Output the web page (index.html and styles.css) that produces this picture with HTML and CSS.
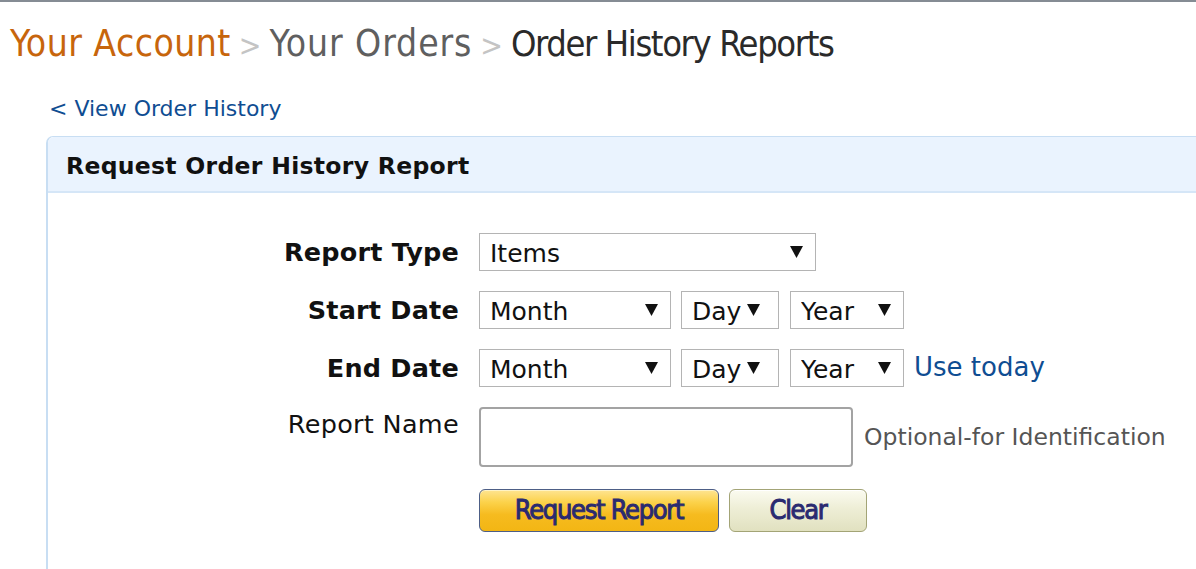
FILE: index.html
```html
<!DOCTYPE html>
<html>
<head>
<meta charset="utf-8">
<link rel="stylesheet" href="styles.css">
</head>
<body>
<div class="topline"></div>
<h1 class="crumbs"><a class="c-account" href="#">Your Account</a><span class="sep">&gt;</span><a class="c-orders" href="#">Your Orders</a><span class="sep">&gt;</span><span class="c-current">Order History Reports</span></h1>
<a class="back" href="#">&lt; View Order History</a>
<div class="panel">
  <div class="panel-head">Request Order History Report</div>
  <div class="panel-body">
    <div class="form">
      <label class="lbl bold">Report Type</label>
      <div class="ctrl"><select class="sel sel-type"><option>Items</option></select></div>

      <label class="lbl bold">Start Date</label>
      <div class="ctrl">
        <select class="sel sel-month"><option>Month</option></select>
        <select class="sel sel-day"><option>Day</option></select>
        <select class="sel sel-year"><option>Year</option></select>
      </div>

      <label class="lbl bold">End Date</label>
      <div class="ctrl">
        <select class="sel sel-month"><option>Month</option></select>
        <select class="sel sel-day"><option>Day</option></select>
        <select class="sel sel-year"><option>Year</option></select>
        <a class="today" href="#">Use today</a>
      </div>

      <label class="lbl name">Report Name</label>
      <div class="ctrl ctrl-name">
        <input class="txt" type="text">
        <span class="hint">Optional-for Identification</span>
      </div>

      <div></div>
      <div class="ctrl buttons">
        <button class="btn btn-req">Request Report</button>
        <button class="btn btn-clear">Clear</button>
      </div>
    </div>
  </div>
</div>
</body>
</html>
```

FILE: styles.css
```css
html, body {
  margin: 0;
  padding: 0;
  background: #fff;
  overflow: hidden;
}
body {
  font-family: "DejaVu Sans", Verdana, sans-serif;
  color: #111;
  width: 1196px;
  height: 569px;
}
.topline {
  height: 2px;
  background: #858c94;
}
.crumbs {
  margin: 0;
  padding: 20px 0 0 10px;
  font-family: "DejaVu Sans Condensed", "DejaVu Sans", sans-serif;
  font-weight: normal;
  font-size: 37px;
  line-height: 44px;
  white-space: nowrap;
}
.crumbs a { text-decoration: none; }
.c-account { color: #c7650c; letter-spacing: 0.45px; }
.c-orders { color: #5f5f5f; letter-spacing: 0.9px; }
.c-current { color: #2a2a2a; letter-spacing: -1.4px; font-size: 36px; }
.sep {
  color: #c4c4c4;
  margin: 0 8px 0 8px;
  font-size: 30px;
}
.back {
  display: inline-block;
  margin: 27px 0 0 49px;
  font-size: 22px;
  line-height: 28px;
  color: #0f4d92;
  text-decoration: none;
}
.panel {
  margin: 13px 0 0 46px;
  border-left: 2px solid #c8def3;
  border-top: 1px solid #c8def3;
  border-top-left-radius: 7px;
  height: 440px;
}
.panel-head {
  background: #eaf3fe;
  border-bottom: 2px solid #d5e6f7;
  height: 54px;
  line-height: 58px;
  padding-left: 18px;
  font-weight: bold;
  font-size: 23.5px;
  letter-spacing: 0.3px;
  color: #111;
  border-top-left-radius: 6px;
}
.panel-body {
  padding-top: 40px;
}
.form {
  display: grid;
  grid-template-columns: 411px auto;
  column-gap: 20px;
  row-gap: 20px;
  align-items: center;
}
.lbl {
  justify-self: end;
  font-size: 25.5px;
  color: #111;
  white-space: nowrap;
}
.lbl.bold { font-weight: bold; letter-spacing: 0.2px; }
.lbl.name {
  align-self: start;
  font-size: 25.5px;
  letter-spacing: 0.3px;
  padding-top: 2px;
}
.ctrl {
  display: flex;
  align-items: center;
}
.sel {
  appearance: none;
  -webkit-appearance: none;
  font-family: "DejaVu Sans", Verdana, sans-serif;
  font-size: 25px;
  color: #111;
  height: 38px;
  border: 1px solid #b4b4b4;
  border-radius: 0;
  background-color: #fff;
  background-image: url("data:image/svg+xml;utf8,<svg xmlns='http://www.w3.org/2000/svg' width='13' height='12'><polygon points='0,0 13,0 6.5,12' fill='%23111'/></svg>");
  background-repeat: no-repeat;
  background-position: right 12px center;
  padding: 2px 0 0 10px;
  margin: 0 10px 0 0;
}
.sel-type { width: 337px; }
.sel-month { width: 192px; }
.sel-day { width: 98px; margin-right: 11px; background-position: right 18px center; }
.sel-year { width: 114px; }
.today {
  font-size: 26px;
  color: #0f4d92;
  text-decoration: none;
  margin-left: 0;
  position: relative;
  top: -1px;
}
.ctrl-name { align-items: center; }
.txt {
  width: 374px;
  height: 60px;
  box-sizing: border-box;
  border: 2px solid #a3a3a3;
  border-radius: 4px;
  margin: 0 11px 0 0;
  padding: 0 8px;
}
.hint {
  font-size: 23.5px;
  color: #555;
  position: relative;
  top: 0;
}
.buttons {
  margin-top: 2px;
  gap: 10px;
}
.btn {
  height: 43px;
  box-sizing: border-box;
  border-radius: 6px;
  font-family: "DejaVu Sans Condensed", "DejaVu Sans", sans-serif;
  font-weight: normal;
  -webkit-text-stroke: 0.95px #2a2a70;
  font-size: 27px;
  letter-spacing: -1.3px;
  color: #2a2a70;
  padding: 0 0 2px 0;
}
.btn-req {
  width: 240px;
  border: 1.5px solid #4d5e86;
  background: linear-gradient(#fee491 0%, #fcd24a 30%, #f6bb1f 60%, #f3b614 100%);
  box-shadow: inset 0 1px 0 #fff3c4;
}
.btn-clear {
  width: 138px;
  border: 1.5px solid #a3a476;
  background: linear-gradient(#fbfbf0 0%, #eeeed6 45%, #e1e1c0 100%);
  box-shadow: inset 0 1px 0 #ffffff;
}
```
